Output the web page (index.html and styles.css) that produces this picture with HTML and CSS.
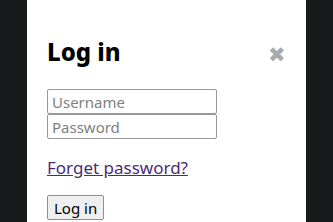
FILE: index.html
```html
<!DOCTYPE html>
<html>
  <head>
    <meta name="viewport" content="width=device-width, initial-scale=1.0" />
    <link rel="stylesheet" href="styles.css">
  </head>
  <body>
    <div class="modal">
      <div class="modal-head">
        <h1>Log in</h1>
        <span class="close">&#10006;</span>
      </div>
      <form class="login-form">
        <input type="text" placeholder="Username" />
        <input type="password" placeholder="Password" />
      </form>
      <a class="forget" href="#">Forget password?</a>
      <button class="submit">Log in</button>
    </div>
  </body>
</html>
```

FILE: styles.css
```css
body {
  margin: 0;
  background: #18191b;
  font-family: "Noto Sans", Arial, sans-serif;
  height: 222px;
  overflow: hidden;
}
.modal {
  background: #fff;
  margin-left: 27px;
  width: 279px;
  height: 222px;
  padding: 37px 20px 0;
  box-sizing: border-box;
}
.modal-head {
  display: flex;
  justify-content: space-between;
  align-items: center;
}
.modal-head h1 {
  margin: 0;
  font-size: 24px;
  font-weight: 800;
  color: #000;
  line-height: 30px;
}
.close {
  color: #aaa;
  font-size: 21px;
  line-height: 20px;
  margin-top: 4px;
  margin-right: 0;
}
.login-form {
  display: flex;
  flex-direction: column;
  margin-top: 22px;
}
.login-form input {
  width: 170px;
  height: 25px;
  box-sizing: border-box;
  border: 1px solid #999;
  border-radius: 2px;
  padding: 0 4px;
  font-family: inherit;
  font-size: 15px;
  margin: 0;
}
.login-form input::placeholder {
  color: #808080;
}
.forget {
  display: block;
  margin-top: 16px;
  font-size: 17px;
  color: #4b2a7b;
  line-height: 26px;
}
.submit {
  margin-top: 14px;
  height: 25px;
  padding: 0 6px;
  font-family: inherit;
  font-size: 15px;
  background: #efefef;
  border: 1px solid #8f8f8f;
  border-radius: 2px;
  color: #000;
}
```
